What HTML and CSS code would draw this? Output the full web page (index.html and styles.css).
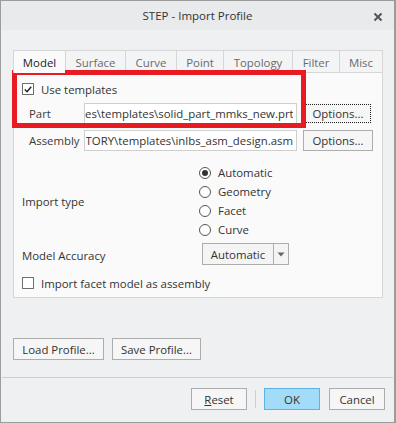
FILE: index.html
```html
<!DOCTYPE html>
<html>
<head>
<meta charset="utf-8">
<link rel="stylesheet" href="styles.css">
</head>
<body>
<div class="window">
  <div class="titlebar">
    <span class="title">STEP - Import Profile</span>
    <svg class="close" width="10" height="10" viewBox="0 0 10 10"><path d="M1.5 1.5 L8.5 8.5 M8.5 1.5 L1.5 8.5" stroke="#555" stroke-width="2" fill="none"/></svg>
  </div>
  <div class="content">
    <div class="tabs">
      <div class="tab active">Model</div>
      <div class="tab">Surface</div>
      <div class="tab">Curve</div>
      <div class="tab">Point</div>
      <div class="tab">Topology</div>
      <div class="tab">Filter</div>
      <div class="tab last">Misc</div>
    </div>
    <div class="panel">
      <div class="row check-row first">
        <span class="checkbox"><svg width="11" height="11" viewBox="0 0 11 11"><path d="M2 5.5 L4.5 8 L9 2.5" stroke="#222" stroke-width="1.6" fill="none"/></svg></span>
        <span>Use templates</span>
      </div>
      <div class="row field-row part">
        <span class="field-label">Part</span>
        <div class="input"><span class="input-text">es\templates\solid_part_mmks_new.prt</span></div>
        <button class="btn opt focus"><span>Options...</span></button>
      </div>
      <div class="row field-row asm">
        <span class="field-label">Assembly</span>
        <div class="input"><span class="input-text">TORY\templates\inlbs_asm_design.asm</span></div>
        <button class="btn opt"><span>Options...</span></button>
      </div>
      <div class="row import-row">
        <span class="block-label">Import type</span>
        <div class="radios">
          <div class="radio-item"><span class="radio on"></span>Automatic</div>
          <div class="radio-item"><span class="radio"></span>Geometry</div>
          <div class="radio-item"><span class="radio"></span>Facet</div>
          <div class="radio-item"><span class="radio"></span>Curve</div>
        </div>
      </div>
      <div class="row accuracy-row">
        <span class="acc-label">Model Accuracy</span>
        <div class="select">
          <span class="select-value">Automatic</span>
          <span class="select-arrow"><svg width="8" height="5" viewBox="0 0 8 5"><path d="M0.5 0.5 L7.5 0.5 L4 4.5 Z" fill="#666"/></svg></span>
        </div>
      </div>
      <div class="row check-row facet">
        <span class="checkbox"></span>
        <span>Import facet model as assembly</span>
      </div>
    </div>
    <div class="profile-row">
      <button class="btn prof">Load Profile...</button>
      <button class="btn prof">Save Profile...</button>
    </div>
  </div>
  <div class="separator"></div>
  <div class="footer">
    <button class="btn foot"><u>R</u>eset</button>
    <span class="vsep"></span>
    <button class="btn foot ok">OK</button>
    <button class="btn foot">Cancel</button>
  </div>
  <div class="highlight"></div>
</div>
</body>
</html>
```

FILE: styles.css
```css
* { box-sizing: border-box; }
html, body { margin: 0; padding: 0; background: #ffffff; }
body { font-family: "Open Sans", "Noto Sans", sans-serif; font-size: 11.4px; color: #333; }

.window {
  position: relative;
  width: 396px;
  height: 423px;
  background: #eff0f2;
  border: 1px solid #9c9c9c;
  border-right-width: 2px;
  display: flex;
  flex-direction: column;
}

.titlebar {
  height: 29px;
  background: #e8eaeb;
  display: flex;
  align-items: center;
  justify-content: center;
  position: relative;
  flex-shrink: 0;
}
.title { font-size: 11.5px; color: #333; }
.close { position: absolute; right: 11px; top: 11px; }

.content { padding: 20px 0 0 12px; flex-shrink: 0; }

.tabs { display: flex; height: 22px; width: 370px; }
.tab {
  height: 22px;
  border: 1px solid #d6d6d6;
  border-bottom: none;
  border-right: none;
  background: #f3f4f5;
  color: #6a6a6a;
  display: flex;
  align-items: center;
  justify-content: center;
  padding-top: 1px;
}
.tab:nth-child(1) { width: 52px; }
.tab:nth-child(2) { width: 60px; }
.tab:nth-child(3) { width: 51px; }
.tab:nth-child(4) { width: 47px; }
.tab:nth-child(5) { width: 69px; }
.tab:nth-child(6) { width: 47px; }
.tab:nth-child(7) { width: 44px; border-right: 1px solid #d6d6d6; }
.tab.active { background: #fafafa; color: #222; position: relative; z-index: 1; height: 23px; }

.panel {
  width: 370px;
  height: 226px;
  background: #fafafa;
  border: 1px solid #d6d6d6;
  display: flex;
  flex-direction: column;
}

.row { display: flex; align-items: center; }

.check-row { padding-left: 8px; height: 18px; }
.check-row.first { margin-top: 7px; }
.checkbox {
  width: 12px; height: 12px;
  border: 1px solid #6e6e6e;
  background: #fff;
  margin-right: 7px;
  display: flex; align-items: center; justify-content: center;
}
.check-row.facet { margin-top: 9px; }

.field-row { height: 22px; padding-left: 15px; }
.field-row.part { margin-top: 4px; }
.field-row.asm { margin-top: 5px; }
.field-label { width: 55px; color: #3a3a3a; }
.input {
  width: 213px; height: 21px;
  border: 1px solid #cfcfcf;
  background: #fff;
  display: flex;
  justify-content: flex-end;
  align-items: center;
  overflow: hidden;
  padding-right: 3px;
}
.input-text { white-space: nowrap; color: #333; overflow: hidden; }

.btn {
  font-family: inherit;
  font-size: 11.4px;
  color: #333;
  background: #f6f6f6;
  border: 1px solid #adadad;
  padding: 0;
  height: 22px;
  display: flex; align-items: center; justify-content: center;
}
.btn.opt { width: 70px; height: 21px; margin-left: 6px; }
.btn.focus span { border: 1px dotted #222; padding: 1px 6px; width: 66px; height: 19px; display: flex; align-items: center; justify-content: center; }
.btn.focus { border-color: #f6f6f6; }

.import-row { margin-top: 12px; padding-left: 8px; }
.block-label { width: 177px; }
.radios { display: flex; flex-direction: column; }
.radio-item { height: 19px; display: flex; align-items: center; }
.radio {
  width: 12px; height: 12px;
  border-radius: 50%;
  border: 1px solid #555;
  background: #fff;
  margin-right: 7px;
  display: flex; align-items: center; justify-content: center;
}
.radio.on::after { content: ""; width: 6px; height: 6px; border-radius: 50%; background: #333; }

.accuracy-row { margin-top: 4px; padding-left: 8px; height: 22px; }
.acc-label { width: 180px; padding-top: 2px; }
.select {
  width: 87px; height: 22px;
  border: 1px solid #adadad;
  background: #f4f4f4;
  display: flex;
}
.select-value { width: 70px; display: flex; align-items: center; justify-content: center; }
.select-arrow { flex: 1; border-left: 1px solid #adadad; display: flex; align-items: center; justify-content: center; }

.profile-row { display: flex; gap: 8px; margin-top: 40px; }
.btn.prof { height: 22px; }
.btn.prof:first-child { width: 91px; }
.btn.prof:last-child { width: 89px; }

.separator { margin: 17px 1px 0 1px; height: 1px; background: #cfcfcf; }

.footer { display: flex; align-items: center; margin-top: 10px; padding-left: 190px; }
.btn.foot { width: 56px; height: 22px; }
.vsep { width: 1px; height: 18px; background: #cfcfcf; margin: 0 8px; }
.btn.ok { background: #a2dcf8; border-color: #5eb3e4; margin-right: 9px; }

.highlight {
  position: absolute;
  left: 11px; top: 69px;
  width: 294px; height: 58px;
  border: 5px solid #e81a22;
  pointer-events: none;
}
```
